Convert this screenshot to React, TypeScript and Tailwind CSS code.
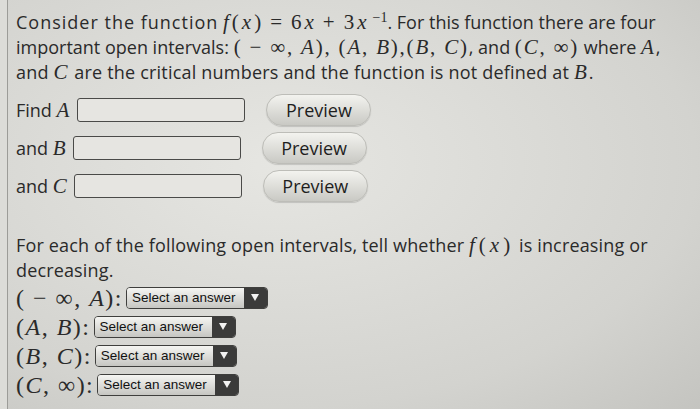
import React from 'react';

const sans = 'font-["Open_Sans",sans-serif]';
const serif = 'font-["Liberation_Serif",serif]';

function M({ children, className = 'tracking-[1.8px]' }: { children: React.ReactNode; className?: string }) {
  return <span className={`${serif} text-[21px] ${className}`}>{children}</span>;
}

function V({ children }: { children: React.ReactNode }) {
  return <i className="italic">{children}</i>;
}

function Op({ children }: { children: React.ReactNode }) {
  return <span className="mx-[6px]">{children}</span>;
}

function AnswerRow({ label, variable, gap }: { label: string; variable: string; gap: string }) {
  return (
    <div className="flex items-center h-[38px]">
      <span className="whitespace-nowrap">
        {label} <M className="tracking-[2px]"><V>{variable}</V></M>
      </span>
      <div className={`${gap} w-[168px] h-[24px] rounded-[3px] border-[1.5px] border-[#4a4a48] bg-[#e6e5e1]`} />
      <button className="ml-[21px] w-[105px] h-[32px] rounded-full border border-[#bdbdb8] bg-[linear-gradient(#f3f3ef,#c9c9c4)] text-[18px] text-[#1e1e1e] shadow-[0_1px_1px_rgba(0,0,0,0.15)]">
        Preview
      </button>
    </div>
  );
}

function SelectBox() {
  return (
    <div className="ml-[3px] flex items-stretch w-[142px] h-[22px] rounded-[4px] border border-[#3f3f3d] overflow-hidden">
      <div className='flex-1 flex items-center pl-[5px] bg-[linear-gradient(#f5f5f2,#c6c6c2)] font-["Liberation_Sans",sans-serif] text-[13.5px] text-[#111]'>
        Select an answer
      </div>
      <div className="w-[23px] bg-[#3b3b3a] flex items-center justify-center">
        <svg width="8" height="7" viewBox="0 0 8 7">
          <path d="M0 0 L8 0 L4 7 Z" fill="#f2f2f2" />
        </svg>
      </div>
    </div>
  );
}

function IntervalRow({ children }: { children: React.ReactNode }) {
  return (
    <div className="flex items-center h-[29px]">
      <span className={`${serif} text-[24px] tracking-[1.5px] whitespace-nowrap leading-none`}>{children}</span>
      <SelectBox />
    </div>
  );
}

export default function App() {
  return (
    <div className="w-[700px] h-[409px] overflow-hidden flex bg-[radial-gradient(ellipse_at_40%_40%,#e6e6e2,#d3d3cf_70%,#c4c4c0)]">
      <div className="w-[8px] shrink-0 bg-[#dcdcd8] border-r border-[#9c9c98]" />
      <div className={`flex-1 flex flex-col ${sans} text-[18px] text-[#2a2a2a] leading-[25px] pl-[8px] pt-[10px]`}>
        <p className="whitespace-nowrap">
          <span className="tracking-[1px]">Consider the function</span>{' '}
          <M className="tracking-[3px]">
            <V>f</V>(<V>x</V>)<Op>=</Op>6<V>x</V>
            <Op>+</Op>3<V>x</V>
            <sup className="text-[14px] ml-[3px] tracking-normal">−1</sup>
          </M>
          . For this function there are four
          <br />
          important open intervals:{' '}
          <M>
            ( − ∞, <V>A</V>), (<V>A</V>, <V>B</V>),(<V>B</V>, <V>C</V>)
          </M>
          , and{' '}
          <M>
            (<V>C</V>, ∞)
          </M>{' '}
          where <M><V>A</V></M>,
          <br />
          <span className="tracking-[0.2px]">
            and <M><V>C</V></M> are the critical numbers and the function is not defined at{' '}
            <M><V>B</V></M>.
          </span>
        </p>

        <div className="flex flex-col mt-[6px]">
          <AnswerRow label="Find" variable="A" gap="ml-[6px]" />
          <AnswerRow label="and" variable="B" gap="ml-[5px]" />
          <AnswerRow label="and" variable="C" gap="ml-[5px]" />
        </div>

        <p className="mt-[28px] whitespace-nowrap tracking-[0.15px]">
          For each of the following open intervals, tell whether{' '}
          <M className="tracking-[4px]">
            <V>f</V>(<V>x</V>)
          </M>{' '}
          is increasing or
          <br />
          decreasing.
        </p>

        <div className="flex flex-col">
          <IntervalRow>
            ( − ∞, <V>A</V>):
          </IntervalRow>
          <IntervalRow>
            (<V>A</V>, <V>B</V>):
          </IntervalRow>
          <IntervalRow>
            (<V>B</V>, <V>C</V>):
          </IntervalRow>
          <IntervalRow>
            (<V>C</V>, ∞):
          </IntervalRow>
        </div>
      </div>
    </div>
  );
}
